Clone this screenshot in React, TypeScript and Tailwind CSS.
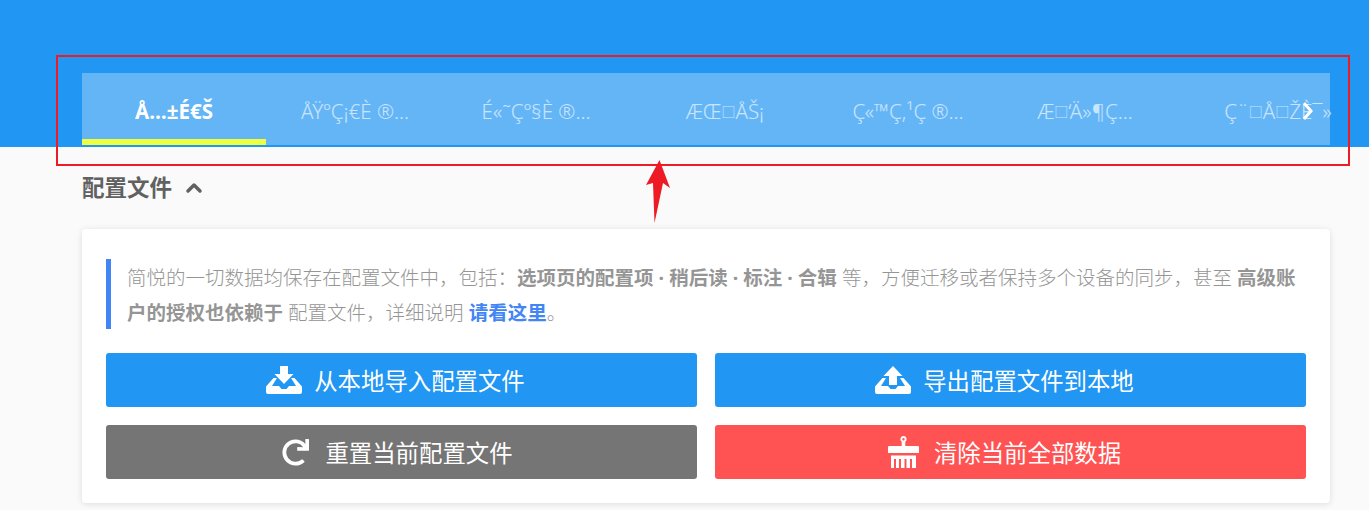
import { ChevronUp } from 'lucide-react';
import { FaRedo } from 'react-icons/fa';

const tabs = [
  { label: 'Å…±É€Š', box: 'w-[184px]', active: true },
  { label: 'ÅŸºÇ¡€È ®…', box: 'w-[178px]' },
  { label: 'É«˜Çº§È ®…', box: 'w-[178px] pl-[6px]' },
  { label: 'ÆŒ□ÅŠ¡', box: 'w-[178px] pl-[28px]' },
  { label: 'Ç«™Ç‚¹Ç ®…', box: 'w-[178px] pl-[38px]' },
  { label: 'Æ□‘Ä»¶Ç…', box: 'w-[178px] pl-[36px]' },
  { label: 'Ç¨□Å□ŽÈ¯»', box: 'w-[178px] pl-[66px]' },
];

const trayPath = 'M0 20.500L7.500 12H11L6 20H13L15.500 23H20.500L23 20H30L25 12H28.500L36 20.500V26a2 2 0 0 1-2 2H2a2 2 0 0 1-2-2z';

function DownloadIcon() {
  return (
    <svg viewBox="0 0 36 28" className="w-[36px] h-[28px]" fill="currentColor">
      <path d="M14 0h8v8h5.500L18 18 8.500 8H14z" />
      <path d={trayPath} />
    </svg>
  );
}

function UploadIcon() {
  return (
    <svg viewBox="0 0 36 28" className="w-[36px] h-[28px]" fill="currentColor">
      <path d="M18 0l9.500 10H22v9h-8v-9H8.500z" />
      <path d={trayPath} />
    </svg>
  );
}

function BroomIcon() {
  return (
    <svg viewBox="0 0 31 32" className="w-[31px] h-[32px]" fill="currentColor">
      <path fillRule="evenodd" d="M15.500 0a3.200 3.200 0 0 1 1.800 5.800V10H30a1 1 0 0 1 1 1v6H0v-6a1 1 0 0 1 1-1h12.700V5.800A3.200 3.200 0 0 1 15.500 0zm0 2a1.200 1.200 0 1 0 0 2.400 1.200 1.200 0 0 0 0-2.400z" />
      <path d="M3 19.500h25V32h-4v-9h-2v9h-3.500v-9h-2v9H13v-9h-2v9H8v-9H6v9H3z" />
    </svg>
  );
}

function TabLabel({ label }: { label: string }) {
  const parts = label.split('□');
  return (
    <span>
      {parts.map((p, i) => (
        <span key={i}>
          {i > 0 && <span className="text-[14px] align-[2px]">□</span>}
          {p}
        </span>
      ))}
    </span>
  );
}

function ActionButton({ color, icon, text, spacing }: { color: string; icon: React.ReactNode; text: string; spacing: string }) {
  return (
    <button className={`${color} ${spacing} h-[54px] rounded-[3px] flex items-center justify-center text-white text-[23.400px]`}>
      {icon}
      <span className="pt-[4px]">{text}</span>
    </button>
  );
}

export default function App() {
  return (
    <div className="relative h-[510px] overflow-hidden bg-[#fafafa] font-['Noto_Sans','Noto_Sans_CJK_SC',sans-serif]">
      <div className="h-[147px] bg-[#2196f3] pt-[73px] pl-[82px] pr-[39px]">
        <div className="flex h-[72px] bg-[#64b5f6] relative">
          {tabs.map((t) => (
            <div
              key={t.label}
              className={`${t.box} shrink-0 flex items-center justify-center pt-[10px] text-[20.500px] border-b-[6px] whitespace-nowrap ${t.active ? 'border-[#eeff41] text-white font-bold' : 'border-transparent text-white/65 font-light'}`}
            >
              <TabLabel label={t.label} />
            </div>
          ))}
          <svg viewBox="0 0 10 18" className="absolute left-[1221px] top-[29px] w-[10px] h-[18px] text-white" fill="none" stroke="currentColor" strokeWidth="3">
            <path d="M1 1l7 8-7 8" />
          </svg>
        </div>
      </div>

      <div className="pl-[82px] pr-[39px]">
        <div className="flex items-center h-[82px]">
          <span className="text-[22.500px] font-bold text-[#616161]">配置文件</span>
          <ChevronUp className="ml-[10px] w-[24px] h-[24px] text-[#616161]" strokeWidth={3.500} />
        </div>
        <div className="bg-white rounded-[4px] shadow-[0_1px_6px_rgba(0,0,0,0.12)] pt-[30px] px-[24px] pb-[24px] h-[274px]">
          <div className="h-[70px] border-l-[5px] border-[#4285f4] pl-[16px] pt-[1px] text-[19.500px] leading-[35px] text-[#959595] font-light">
            简悦的一切数据均保存在配置文件中，包括：<b className="font-bold">选项页的配置项 · 稍后读 · 标注 · 合辑</b> 等，方便迁移或者保持多个设备的同步，甚至 <b className="font-bold">高级账户的授权也依赖于</b> 配置文件，详细说明 <b className="font-bold text-[#4285f4]">请看这里</b>。
          </div>
          <div className="grid grid-cols-2 gap-x-[18px] gap-y-[18px] mt-[24px]">
            <ActionButton color="bg-[#2196f3]" spacing="gap-[12px] pr-[12px]" icon={<DownloadIcon />} text="从本地导入配置文件" />
            <ActionButton color="bg-[#2196f3]" spacing="gap-[12px] pr-[12px]" icon={<UploadIcon />} text="导出配置文件到本地" />
            <ActionButton color="bg-[#757575]" spacing="gap-[16px] pr-[8px]" icon={<FaRedo className="w-[27px] h-[27px]" />} text="重置当前配置文件" />
            <ActionButton color="bg-[#ff5252]" spacing="gap-[15px] pr-[12px]" icon={<BroomIcon />} text="清除当前全部数据" />
          </div>
        </div>
      </div>

      {/* annotation over the screenshot */}
      <div className="absolute left-[56px] top-[55px] w-[1294px] h-[111px] border-2 border-[#ed1c24]" />
      <svg viewBox="0 0 26 64" className="absolute left-[645px] top-[160px] w-[26px] h-[64px]" fill="#ed1c24">
        <path d="M14.500 0L25 28 18 23 9.500 63 8 23 1 25z" />
      </svg>
    </div>
  );
}
